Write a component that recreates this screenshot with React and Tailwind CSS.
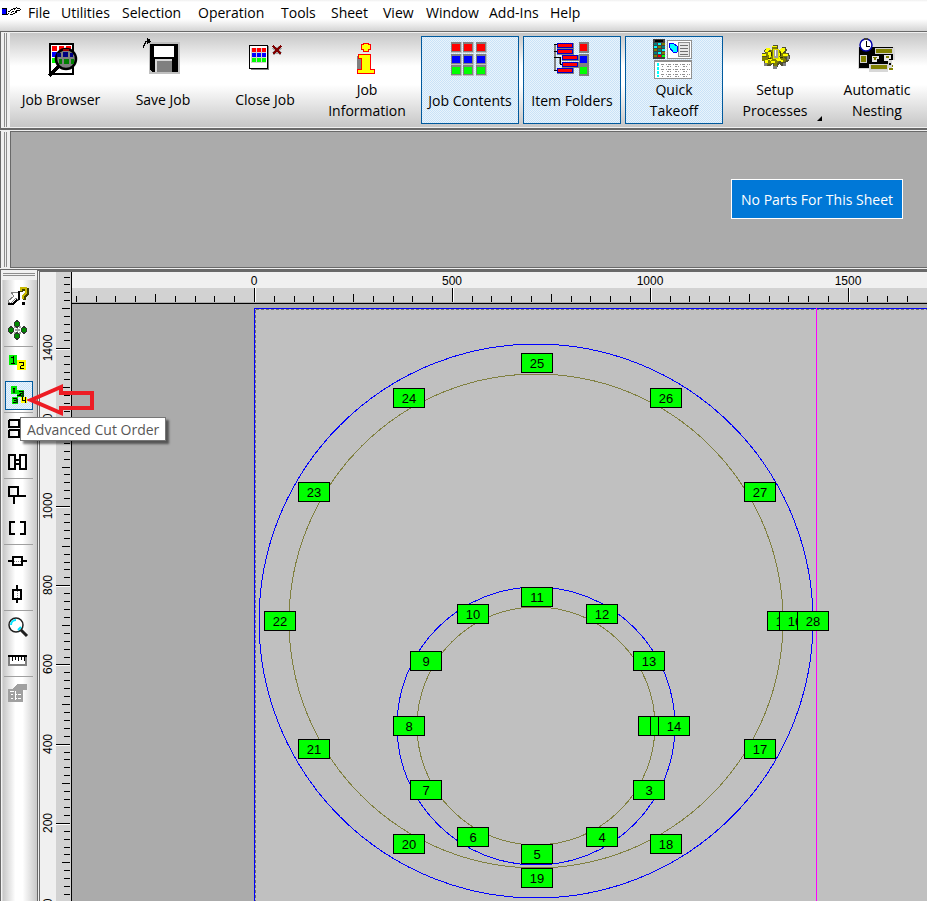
import React from "react";

const MENU = [
  ["File", "w-[33px]"],
  ["Utilities", "w-[61px]"],
  ["Selection", "w-[76px]"],
  ["Operation", "w-[83px]"],
  ["Tools", "w-[50px]"],
  ["Sheet", "w-[52px]"],
  ["View", "w-[43px]"],
  ["Window", "w-[63px]"],
  ["Add-Ins", "w-[61px]"],
  ["Help", "w-[40px]"],
];

const RGB = ["#ff0000", "#0000ff", "#00ff00"];

function Svg({ w = 40, h = 40, children, className = "" }) {
  return (
    <svg width={w} height={h} viewBox={`0 0 ${w} ${h}`} className={`shrink-0 overflow-visible ${className}`} shapeRendering="crispEdges" aria-hidden="true">
      {children}
    </svg>
  );
}

function PointingHand() {
  return (
    <Svg w={20} h={10}>
      <rect x="0" y="2" width="4" height="5" fill="#0000ff" />
      <path d="M0 1h5v1H0zM0 7h7v1H0zM4 2h1v5H4z" fill="#000" />
      <path d="M6 6h2l3-4h3v-1h4v2h-4v2h-2v2H9v1H6z" fill="#fff" />
      <path d="M6 4h2v1H6zM8 3h1v1H8zM9 2h2v1H9zM11 1h3v1h-3zM14 0h1v1h-1zM15 1h3v1h-3zM18 2h1v1h-1zM14 3h4v1h-4zM10 4h2v1h-2zM13 4h2v2h-2zM11 6h2v1h-2zM6 6h1v1H6zM8 7h3v1H8zM9 5h1v1H9zM12 2h1v1h-1z" fill="#000" />
    </Svg>
  );
}

function JobBrowserIcon() {
  return (
    <Svg>
      <rect x="7" y="4" width="25" height="32" fill="#000" />
      <rect x="9" y="6" width="21" height="28" fill="#fff" />
      {[0, 1, 2].map((r) =>
        [0, 1, 2].map((c) => <rect key={`${r}${c}`} x={10 + c * 7} y={7 + r * 6} width="5" height="5" fill={RGB[r]} />)
      )}
      <g shapeRendering="auto">
        <circle cx="24" cy="20" r="10" fill="#808080" stroke="#000" strokeWidth="2.5" />
      </g>
      <path d="M15 14h4v4h-4zM21 13h5v5h-5zM28 14h3v4h-3z" fill="#000080" />
      <path d="M17 20h3v5h-3zM22 20h5v5h-5zM29 20h3v5h-3z" fill="#008000" />
      <path d="M21 10h6v2h-6z" fill="#a00000" />
      <path d="M17 27L7 37" stroke="#000" strokeWidth="4" />
    </Svg>
  );
}

function SaveIcon() {
  return (
    <Svg>
      <path d="M5 3h31v32H5z" fill="#c0c0c0" />
      <path d="M6 5h28v28H8l-2-2z" fill="#000" />
      <path d="M10 7h20v11H10z" fill="#fff" />
      <path d="M11 20h17v13H11z" fill="#d8d8d8" />
      <path d="M13 22h15v11H13z" fill="#808080" />
      <path d="M-1 9V6h1V4h1V2h4" fill="none" stroke="#000" />
      <path d="M3-1h1v1h2v2h1v1H6v1H4v1H3z" fill="#000" />
    </Svg>
  );
}

function CloseIcon() {
  return (
    <Svg>
      <path d="M5 7h18v24H5z" fill="#808080" />
      <path d="M3 6h19v24H3z" fill="#000" />
      <path d="M4 7h17v22H4z" fill="#fff" />
      {[0, 1, 2].map((r) =>
        [0, 1, 2].map((c) => (
          <g key={`${r}${c}`}>
            <rect x={5 + c * 5} y={9 + r * 5} width="5" height="5" fill="#d0d0d0" />
            <rect x={6 + c * 5} y={9 + r * 5} width="4" height="4" fill={RGB[r]} />
          </g>
        ))
      )}
      <path d="M27 8l8 7m0-7l-8 7" stroke="#a8a8a8" strokeWidth="4" />
      <path d="M27 7l8 8m0-8l-8 8" stroke="#800000" strokeWidth="2" />
    </Svg>
  );
}

function InfoIcon() {
  return (
    <Svg>
      <path d="M9 17h4v13H9zM13 5h2v6h-2zM9 33h14v2H9z" fill="#808080" />
      <path d="M15 4h5v1h2v5h-2v2h-5v-2h-2V5h2z" fill="#ffff00" stroke="#ff0000" />
      <path d="M10 15h12v15h4v4H9v-4h4V19h-3z" fill="#ffff00" stroke="#ff0000" />
    </Svg>
  );
}

function ContentsIcon() {
  return (
    <Svg>
      {[0, 1, 2].map((r) =>
        [0, 1, 2].map((c) => (
          <g key={`${r}${c}`}>
            <rect x={1 + c * 12 + (c > 1 ? 1 : 0)} y={3 + r * 12 - (r > 1 ? 1 : 0)} width="11" height="11" fill="#c0c0c0" />
            <rect x={1 + c * 12 + (c > 1 ? 1 : 0)} y={3 + r * 12 - (r > 1 ? 1 : 0)} width="10" height="10" fill="#808080" />
            <rect x={2 + c * 12 + (c > 1 ? 1 : 0)} y={5 + r * 12 - (r > 1 ? 1 : 0)} width="8" height="7" fill={RGB[r]} />
          </g>
        ))
      )}
    </Svg>
  );
}

function FoldersIcon() {
  const bars = [[5, 4], [5, 10], [10, 16], [10, 23], [5, 29]];
  return (
    <Svg>
      <path d="M2 5h2v26H2zM7 18h2v7H7z" fill="#808080" />
      <path d="M2 5h3M2 12h3M2 18h7M8 18v7h2M2 31h3" stroke="#000" fill="none" />
      {bars.map(([x, y]) => (
        <g key={y}>
          <rect x={x} y={y} width="17" height="6" fill="#808080" />
          <rect x={x} y={y} width="16" height="5" fill="#0000c8" />
          <rect x={x + 1} y={y + 1} width="14" height="3" fill="#ff0000" />
        </g>
      ))}
      {RGB.map((f, i) => (
        <g key={f}>
          <rect x="27" y={3 + i * 12 - (i > 1 ? 1 : 0)} width="10" height="11" fill="#808080" />
          <rect x="28" y={5 + i * 12 - (i > 1 ? 1 : 0)} width="7" height="7" fill={f} />
        </g>
      ))}
    </Svg>
  );
}

function TakeoffIcon() {
  const keys = ["#008080", "#00ffff", "#808000", "#ff0000", "#00ff00", "#800000"];
  return (
    <Svg>
      <rect x="-1" y="0" width="12" height="20" fill="#404040" />
      <rect x="1" y="1" width="8" height="2" fill="#000" />
      {[0, 1, 2, 3, 4].map((r) =>
        [0, 1, 2].map((c) => (
          <rect key={`${r}${c}`} x={c * 4} y={4 + r * 3} width="3" height="2" fill={r < 3 ? keys[(r + c) % 3] : keys[(r * 2 + c) % 6]} />
        ))
      )}
      <rect x="13" y="1" width="25" height="19" fill="#909090" />
      <rect x="14" y="2" width="23" height="17" fill="#fff" />
      <path d="M15 4h4l4 3v6l-3 1-5-6z" fill="#00ffff" stroke="#0000ff" />
      <path d="M24 3h12v15H24z" fill="#909090" />
      <path d="M25 4h10v13H25z" fill="#e8e8e8" />
      <path d="M26 6.500h8M26 9.500h8M26 12.500h8M26 15.500h8" stroke="#707070" />
      <rect x="0" y="21" width="38" height="19" fill="#909090" />
      <rect x="1" y="23" width="36" height="16" fill="#fff" />
      <path d="M4 24v14" stroke="#00ffff" strokeWidth="2" strokeDasharray="3 1" />
      {[25, 30, 35].map((y) => (
        <g key={y} stroke="#909090">
          <path d={`M7 ${y}h29`} strokeDasharray="3 2 1 1" />
          <path d={`M8 ${y + 2}h28`} strokeDasharray="1 4 2 1" />
        </g>
      ))}
    </Svg>
  );
}

function GearIcon() {
  return (
    <Svg>
      <path d="M17 6h5v2l1 3 3-3h4l1 3-1 3h3l1 4-1 4-3 1-1 4h-3l-3-2-1 3h-4l-1-3-3 2H9l-1-4 1-2H6v-7h3l-1-3 2-2h3l3 2z" fill="#505030" />
      <path d="M16 7h5v4h3l3-2 2 2-2 3h4v4h-4l3 3-2 2-4-1-3 2v3h-3v-3l-4 1-4 1 2-4H6v-4h5l-3-3 3-3 4 3z" fill="#808000" />
      <path d="M16 7h5v1h-5zM10 9h3l2 2h-2l-2 2h-2zM26 9h3v2l-2 3h-2v-2l-2-1zM6 15h4v2H6zM9 21h3v3H9zM15 22h4v2h-4zM24 20l4 2-2 1-3-1zM27 15h5v2h-5zM12 13h3v5h-2zM22 14h3v3h-2zM13 18l3 2-1 2-3-1zM20 20l4-2v3l-3 1z" fill="#ffff00" />
      <path d="M17 10h5v9h-5z" fill="#a0a0a0" stroke="#e0e000" />
      <path d="M19 11h1v6h-1z" fill="#fff" />
      <path d="M17 27h4v3h-4zM8 24h3v3H8zM27 24h3v3h-3zM31 17h2v4h-2z" fill="#808080" />
      <path d="M15 13v4M24 13v4M12 19h3M24 18h3" stroke="#303000" />
    </Svg>
  );
}

function NestingIcon() {
  return (
    <Svg>
      <path d="M0 8h37v13h-3v8h-4v4H11v-3H0z" fill="#d8d8d8" />
      <path d="M1 8h34v13h-5v4H11v4H1z" fill="#000" />
      <path d="M31 24h2v2h-2z" fill="#000" />
      <path d="M17 9h17v5H17zM2 16h6v7H2zM12 25h17v5H12z" fill="#808000" stroke="#d0d0d0" />
      <path d="M14 17h7v3h-2v3h-5zM26 16h7v4h-2v2h-5z" fill="#e8e8e8" />
      <path d="M15 18h4v1h-1v2h-2v-2h-1zM28 17h3v2h-3z" fill="#808000" />
      <path d="M34 26h1v2h-1zM31 29h4v2h-4z" fill="#808000" />
      <g shapeRendering="auto">
        <circle cx="8" cy="6" r="6" fill="#fff" stroke="#0000a8" strokeWidth="1.5" />
      </g>
      <path d="M8 2v5h4" stroke="#000" strokeWidth="1" fill="none" />
      <path d="M6 0h4" stroke="#404040" strokeWidth="2" />
    </Svg>
  );
}

const TOOLS = [
  { lines: ["Job Browser"], Icon: JobBrowserIcon },
  { lines: ["Save Job"], Icon: SaveIcon },
  { lines: ["Close Job"], Icon: CloseIcon },
  { lines: ["Job", "Information"], Icon: InfoIcon },
  { lines: ["Job Contents"], Icon: ContentsIcon, on: true },
  { lines: ["Item Folders"], Icon: FoldersIcon, on: true },
  { lines: ["Quick", "Takeoff"], Icon: TakeoffIcon, on: true },
  { lines: ["Setup", "Processes"], Icon: GearIcon, more: true },
  { lines: ["Automatic", "Nesting"], Icon: NestingIcon },
];

const CHECKED = "border-[#005a9e] bg-[#d8ebfa] bg-[repeating-conic-gradient(#c9e2f7_0_25%,#e9f4fc_0_50%)] bg-[length:2px_2px]";

function ToolButton({ lines, Icon, on, more }) {
  return (
    <button
      aria-pressed={on ? true : undefined}
      className={`relative flex h-[88px] w-[98px] shrink-0 flex-col items-center border pt-[2px] ${on ? CHECKED : "border-transparent"}`}
    >
      <Icon />
      <span className={`flex flex-1 flex-col justify-center text-center leading-[21px] whitespace-nowrap ${on ? "pb-[2px]" : "pr-[2px] pb-[4px]"}`}>
        {lines.map((l) => (
          <span key={l}>{l}</span>
        ))}
      </span>
      {more && <span className="absolute right-[2px] bottom-[2px] h-[5px] w-[5px] bg-black [clip-path:polygon(100%_0,100%_100%,0_100%)]" />}
    </button>
  );
}

const line = { fill: "none", stroke: "#000", strokeWidth: 2 };
const SIDE = [
  [
    {
      name: "Context help",
      art: (
        <>
          <path d="M3 5h7v8l-2-2-6 6-2-3 6-5z" fill="#fff" stroke="#808080" strokeWidth="1" />
          <path d="M11 4v9M0 17h5l4-4" fill="none" stroke="#000" strokeWidth="2" />
          <path d="M13 5V2h6v5l-3 3v3" fill="none" stroke="#404000" strokeWidth="3" />
          <path d="M13 4V1h5v5l-3 3v3" fill="none" stroke="#c8b800" strokeWidth="2" />
          <path d="M14 15h3v3h-3z" fill="#000" />
        </>
      ),
    },
    {
      name: "Pan",
      art: (
        <>
          <path d="M7 9h5v2H7zM9 7h1v6H9zM6 6h2v2H6zM11 6h2v2h-2zM6 12h2v2H6zM11 12h2v2h-2z" fill="#a0a0a0" />
          {[[9, 4], [9, 16], [3, 10], [16, 10]].map(([x, y]) => (
            <g key={`${x}-${y}`}>
              <path d={`M${x - 1} ${y - 4}h2v1h1v1h1v4h-1v1h-1v1h-2v-1h-1v-1h-1v-4h1v-1h1z`} fill="#303830" />
              <rect x={x - 2} y={y - 2} width="4" height="4" fill="#008a00" />
            </g>
          ))}
        </>
      ),
    },
  ],
  [
    {
      name: "Cut order",
      art: (
        <>
          <path d="M1 2h8v10H1z" fill="#00f000" />
          <path d="M3 4h2v6h2M5 3v7H3" {...line} strokeWidth="1" />
          <path d="M9 7h9v10H9z" fill="#ffff00" />
          <path d="M11 9h4v3h-1l-2 2v1h4" {...line} strokeWidth="1" />
        </>
      ),
    },
    {
      name: "Advanced cut order",
      on: true,
      art: (
        <>
          <path d="M3 0h6v8H3zM9 4h7v7H9zM4 11h6v7H4z" fill="#00e800" />
          <path d="M13 11h6v6h-6z" fill="#ffff00" />
          <path d="M5 2h1v4M11 5h3v2l-3 2h4M5 12h3v2H6M8 14v2H5M14 11v3h4M17 11v6" {...line} strokeWidth="1" />
          <path d="M5 3h2v4H5zM15 5h1v6h-3zM8 13h2v4H8z" fill="#004800" />
        </>
      ),
    },
  ],
  [
    { name: "Join parts", art: <path d="M1 1h10v3h7M1 1v7h10v-2h7M1 11h10v3h7M1 11v7h10v-2h7" {...line} /> },
    { name: "Bridge", art: <path d="M1 3h6v5h5V3h6v14h-6v-5H7v5H1zM7 8v4M12 8v4" {...line} strokeWidth="1.5" /> },
  ],
  [
    { name: "Corner", art: <path d="M1 2h9v9H1zM6 11v8M6 11h12" {...line} strokeWidth="1.5" /> },
    { name: "Brackets", art: <path d="M7 4H2v12h5M12 4h5v12h-5" {...line} strokeWidth="1.5" /> },
  ],
  [
    {
      name: "Horizontal centre",
      art: (
        <>
          <path d="M0 10h5M14 10h5M5 6h9v8H5z" {...line} strokeWidth="1.5" />
          <path d="M6 10h8" stroke="#808080" strokeDasharray="1 1" />
        </>
      ),
    },
    {
      name: "Vertical centre",
      art: (
        <>
          <path d="M9 1v5M9 15v4M5 6h8v9H5z" {...line} strokeWidth="1.5" />
          <path d="M9 7v8" stroke="#808080" strokeDasharray="1 1" />
        </>
      ),
    },
  ],
  [
    {
      name: "Zoom",
      art: (
        <g shapeRendering="auto">
          <circle cx="8" cy="8" r="7" fill="#fff" stroke="#202020" strokeWidth="1.5" />
          <path d="M3 8a5 5 0 0 1 5-5M10 13l3-3" fill="none" stroke="#00e5ff" strokeWidth="2" />
          <path d="M13 13l6 6" stroke="#202020" strokeWidth="3" />
        </g>
      ),
    },
    {
      name: "Measure",
      art: (
        <>
          <path d="M1 6h17v9H1z" fill="#fff" stroke="#808080" strokeWidth="1.5" />
          <path d="M0 6h19" stroke="#000" strokeWidth="1.5" />
          <path d="M4 7v4M7 7v3M10 7v4M13 7v3M16 7v4" stroke="#000" />
        </>
      ),
    },
  ],
  [
    {
      name: "Properties",
      art: (
        <>
          <path d="M9 0h10v6h-4v12H0V5h4z" fill="#a0a0a0" />
          <path d="M2 7.500h4M3 10.500h2M3 14.500h2M7 10.500h2M10 10.500h3M7 14.500h2M10 14.500h3M7.500 7v9" stroke="#fff" strokeWidth="1" />
        </>
      ),
    },
  ],
];

function SideBar() {
  return (
    <nav aria-label="Sheet tools" className="relative flex w-[37px] shrink-0 flex-col border-l border-[#696969] bg-[linear-gradient(90deg,#fff_0,#c8c8c8_6%,#fff_40%,#fff_60%,#c8c8c8_100%)]">
      <div className="flex h-[10px] shrink-0 flex-col gap-px border-x-2 border-[#f0f0f0] bg-[#f0f0f0] pt-[3px]">
        <span className="h-px bg-[#8c8c8c]" />
        <span className="h-px bg-[#8c8c8c]" />
      </div>
      {SIDE.map((group, g) => (
        <div key={g} className="flex h-[66px] shrink-0 flex-col pr-px">
          <span className={`mx-[3px] h-px shrink-0 ${g ? "bg-[#a0a0a0]" : ""}`} />
          {group.map((b) => (
            <button key={b.name} aria-label={b.name} className="flex h-[33px] w-full items-center justify-center">
              <span className={`flex h-[29px] w-[28px] items-center border pr-[6px] pl-[2px] ${b.on ? CHECKED : "border-transparent"}`}>
                <Svg w={20} h={20}>{b.art}</Svg>
              </span>
            </button>
          ))}
        </div>
      ))}
      <div className="absolute top-[147px] left-[19px] z-20 flex h-6 items-center border border-[#767676] bg-white px-[6px] whitespace-nowrap text-[#575757] shadow-[3px_3px_2px_rgba(0,0,0,0.5)]" role="tooltip">
        Advanced Cut Order
      </div>
      <svg className="absolute top-[113px] left-[26px] z-30" width="70" height="34" viewBox="0 0 70 34" aria-hidden="true">
        <path d="M4 17L34 4v6h31v15H34v5z" fill="none" stroke="#ed1c24" strokeWidth="4" />
      </svg>
    </nav>
  );
}

/* Drawing scale: 19.79 px for 50 units across, 7.917 px for 20 units down. */
function TopRuler() {
  const ticks = [];
  for (let i = -9; i < 110; i++) ticks.push(i);
  return (
    <div className="h-8 shrink-0 overflow-hidden border-b border-black bg-[linear-gradient(#f0f0f0_16px,#d2d2d2_16px)]">
      <svg width="100%" height="31" className="block" aria-label="Horizontal ruler">
        {ticks.map((i) => {
          const x = Math.round(182 + i * 19.79);
          const major = i % 10 === 0;
          const top = major ? 16 : i % 5 === 0 ? 22 : 24;
          return (
            <g key={i}>
              {major && <rect x={x + 1} y="16" width="1" height="14" fill="#fff" />}
              <rect x={x} y={top} width="1" height={30 - top} fill="#000" />
              {major && (
                <text x={x} y="13" textAnchor="middle" className="font-['Liberation_Sans',sans-serif] text-[12px]">
                  {i * 50}
                </text>
              )}
            </g>
          );
        })}
        <rect y="30" width="100%" height="1" fill="#ababab" />
      </svg>
    </div>
  );
}

function LeftRuler() {
  const ticks = [];
  for (let i = -20; i < 80; i++) ticks.push(i);
  return (
    <div className="w-8 shrink-0 overflow-hidden border-r border-black bg-[linear-gradient(90deg,#f0f0f0_16px,#d2d2d2_16px)]">
      <svg width="31" height="100%" className="block" aria-label="Vertical ruler">
        {ticks.map((i) => {
          const y = Math.round(630 - i * 7.917);
          const major = i % 10 === 0;
          const left = major ? 16 : i % 5 === 0 ? 22 : 24;
          return (
            <g key={i}>
              {major && <rect x="16" y={y + 1} width="14" height="1" fill="#fff" />}
              <rect x={left} y={y} width={30 - left} height="1" fill="#000" />
              {major && (
                <text transform={`translate(12 ${y}) rotate(-90)`} textAnchor="middle" className="font-['Liberation_Sans',sans-serif] text-[12px]">
                  {i * 20}
                </text>
              )}
            </g>
          );
        })}
      </svg>
    </div>
  );
}

/* Cut sequence tags: number, centre x, centre y; later entries lie on top. */
const TAGS = [
  [1, 582, 422], [2, 594, 422], [3, 577, 486], [4, 530, 533], [5, 465, 550], [6, 401, 533], [7, 354, 486],
  [8, 337, 422], [9, 354, 357], [10, 401, 310], [11, 465, 293], [12, 530, 310], [13, 577, 357], [14, 602, 422],
  [15, 711, 317], [16, 723, 317], [17, 688, 445], [18, 594, 540], [19, 465, 574], [20, 337, 540], [21, 242, 445],
  [22, 208, 317], [23, 242, 188], [24, 337, 94], [25, 465, 59], [26, 594, 94], [27, 688, 188], [28, 741, 317],
];

function Canvas() {
  return (
    <main className="relative flex-1 overflow-hidden bg-[#ababab]">
      <svg width="100%" height="100%" className="absolute inset-0" shapeRendering="crispEdges" aria-label="Sheet drawing">
        <rect x="182" y="4" width="100%" height="100%" fill="#c0c0c0" />
        <path d="M183.5 5.5V3000" stroke="#707070" strokeDasharray="3 2" />
        <path d="M183.5 5.5H4000" stroke="#707070" strokeDasharray="3 2" />
        <path d="M182.5 3000V4.5H4000" fill="none" stroke="#0000ff" />
        <path d="M744.5 4V3000" stroke="#ff00ff" />
        <circle cx="464" cy="317" r="277" fill="none" stroke="#0000ff" />
        <circle cx="464" cy="317" r="247" fill="none" stroke="#808040" />
        <circle cx="464" cy="422" r="139" fill="none" stroke="#0000ff" />
        <circle cx="464" cy="422" r="119" fill="none" stroke="#808040" />
      </svg>
      {TAGS.map(([n, x, y]) => (
        <span
          key={n}
          style={{ left: x - 16, top: y - 10 }}
          className="absolute flex h-5 w-8 items-center justify-center border border-black bg-[#00ff00] font-['Liberation_Sans',sans-serif] text-[13px] leading-none"
        >
          {n}
        </span>
      ))}
    </main>
  );
}

function Grip() {
  return (
    <div className="flex w-[10px] shrink-0 gap-px border-l border-[#696969] bg-[#f0f0f0] py-px pl-[3px]">
      <span className="w-px bg-[#8c8c8c]" />
      <span className="w-px bg-[#8c8c8c]" />
    </div>
  );
}

export default function App() {
  return (
    <div className="flex h-screen flex-col overflow-hidden bg-[#f0f0f0] font-['Open_Sans','Noto_Sans',sans-serif] text-[14px] text-black">
      <header className="flex h-[31px] shrink-0 items-start bg-[linear-gradient(#f0f0f0_0,#fff_2px,#fff_19px,#d4d4d4_31px)] pt-[3px] pl-[2px]">
        <span className="w-[26px] shrink-0 pt-[4px]">
          <PointingHand />
        </span>
        {MENU.map(([label, w]) => (
          <button key={label} className={`${w} shrink-0 text-left leading-5 whitespace-nowrap`}>
            {label}
          </button>
        ))}
      </header>

      <div className="flex h-[99px] shrink-0 overflow-hidden border-t border-b-2 border-[#696969]">
        <Grip />
        <div className="flex flex-1 gap-1 border-y border-[#f0f0f0] bg-[linear-gradient(#c6c6c6_0,#fff_35%,#fff_55%,#c6c6c6_100%)] pt-[3px] pl-[3px]">
          {TOOLS.map((t) => (
            <ToolButton key={t.lines.join(" ")} {...t} />
          ))}
        </div>
      </div>

      <section className="mt-px flex h-[137px] shrink-0">
        <Grip />
        <div className="flex flex-1 items-start justify-end border-y border-l border-[#696969] bg-[#ababab] pt-[47px] pr-6">
          <div className="flex h-10 items-center border border-white bg-[#0078d7] px-[9px] whitespace-nowrap text-white">
            No Parts For This Sheet
          </div>
        </div>
      </section>

      <div className="mt-px flex min-h-0 flex-1 border-t border-[#696969]">
        <SideBar />
        <div className="flex min-w-0 flex-1 border-t-2 border-l-[3px] border-double border-[#696969]">
          <LeftRuler />
          <div className="flex min-w-0 flex-1 flex-col">
            <TopRuler />
            <Canvas />
          </div>
        </div>
      </div>
    </div>
  );
}
